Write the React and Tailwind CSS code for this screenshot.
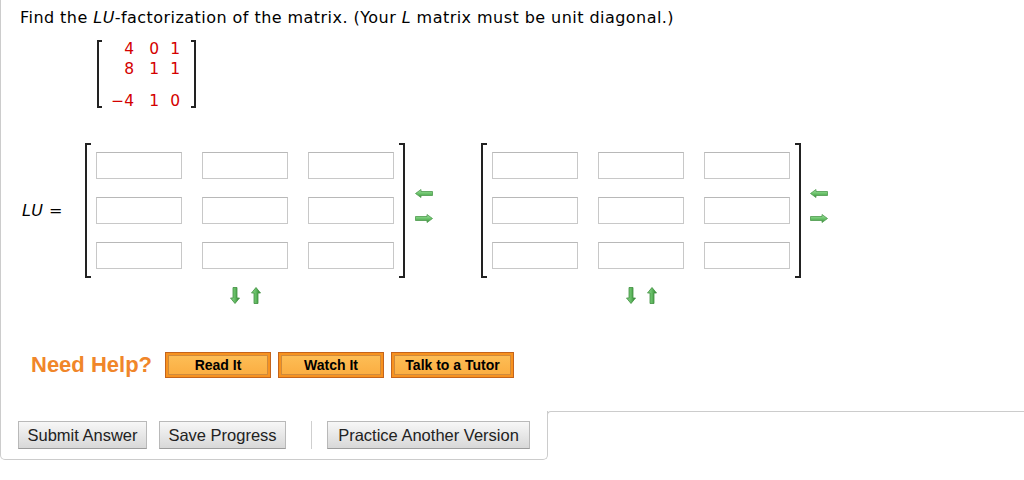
import React from 'react';

const sans = { fontFamily: '"DejaVu Sans", Verdana, sans-serif' };
const arial = { fontFamily: '"Liberation Sans", Arial, sans-serif' };

function HArrow({ dir }) {
  const d = dir === 'left'
    ? 'M0.5 4.5 L6 0.5 L6 2.5 L17.5 2.5 L17.5 6.5 L6 6.5 L6 8.5 Z'
    : 'M17.5 4.5 L12 0.5 L12 2.5 L0.5 2.5 L0.5 6.5 L12 6.5 L12 8.5 Z';
  return (
    <svg width="18" height="9" viewBox="0 0 18 9">
      <defs>
        <linearGradient id={'hg' + dir} x1="0" y1="0" x2="0" y2="1">
          <stop offset="0" stopColor="#a8e0a8" />
          <stop offset="0.5" stopColor="#6cc46c" />
          <stop offset="1" stopColor="#3f8f3f" />
        </linearGradient>
      </defs>
      <path d={d} fill={'url(#hg' + dir + ')'} stroke="#4d9a4d" strokeWidth="0.8" />
    </svg>
  );
}

function VArrow({ dir }) {
  const d = dir === 'down'
    ? 'M3 0.5 L7 0.5 L7 11 L9.5 11 L5 16.5 L0.5 11 L3 11 Z'
    : 'M3 16.5 L7 16.5 L7 6 L9.5 6 L5 0.5 L0.5 6 L3 6 Z';
  return (
    <svg width="10" height="17" viewBox="0 0 10 17">
      <defs>
        <linearGradient id={'vg' + dir} x1="0" y1="0" x2="1" y2="0">
          <stop offset="0" stopColor="#8fd48f" />
          <stop offset="0.5" stopColor="#62bb62" />
          <stop offset="1" stopColor="#2f7f2f" />
        </linearGradient>
      </defs>
      <path d={d} fill={'url(#vg' + dir + ')'} stroke="#3f8f3f" strokeWidth="0.8" />
    </svg>
  );
}

function Cell() {
  return (
    <input
      type="text"
      className="w-[86px] h-[27px] border border-[#c8c8c8] border-t-[#b8b8b8] bg-white outline-none"
    />
  );
}

function BigMatrix() {
  return (
    <div className="flex flex-col">
      <div className="flex">
        <div className="w-[6px] border-l-2 border-t-2 border-b-2 border-[#222]" />
        <div className="grid grid-cols-[86px_86px_86px] gap-x-[20px] gap-y-[18px] px-[5px] py-[9px]">
          {Array.from({ length: 9 }).map((_, i) => (
            <Cell key={i} />
          ))}
        </div>
        <div className="w-[6px] border-r-2 border-t-2 border-b-2 border-[#222]" />
      </div>
      <div className="flex justify-center gap-[11px] mt-[9px]">
        <VArrow dir="down" />
        <VArrow dir="up" />
      </div>
    </div>
  );
}

function SideArrows({ className }) {
  return (
    <div className={'flex flex-col gap-[16px] mt-[46px] ' + className}>
      <HArrow dir="left" />
      <HArrow dir="right" />
    </div>
  );
}

function HelpButton({ label, w }) {
  return (
    <button className={'h-[26px] border border-[#c4641c] bg-[#f7921f] p-[2px] flex ' + w} style={arial}>
      <span className="flex-1 flex items-center justify-center border border-[#cf8a3c] bg-linear-to-b from-[#fdbd55] to-[#fbae42] text-[14px] font-bold text-black leading-none">
        {label}
      </span>
    </button>
  );
}

function GrayButton({ label, w }) {
  return (
    <button
      className={'h-[28px] border border-[#b9b9b9] border-b-[#9c9c9c] bg-linear-to-b from-[#f7f7f7] to-[#d8d8d8] text-[16.5px] text-[#222] leading-none ' + w}
      style={arial}
    >
      {label}
    </button>
  );
}

export default function App() {
  const small = [
    ['4', '0', '1'],
    ['8', '1', '1'],
    ['\u22124', '1', '0'],
  ];

  return (
    <div className="w-[1024px] h-[480px] bg-white text-black overflow-hidden" style={sans}>
      <div className="border-l border-[#cccccc] h-[411px]">
        <p className="pt-[9px] pl-[19px] text-[16px] leading-[18px] tracking-[0.45px]">
          Find the <i>LU</i>-factorization of the matrix. (Your <i>L</i> matrix must be unit diagonal.)
        </p>

        <div className="flex ml-[96px] mt-[13px] h-[68px]">
          <div className="w-[5px] border-l-2 border-t-2 border-b-2 border-[#222]" />
          <div className="-mt-[1px] text-[15.5px] leading-[20px] text-[#d40000] pr-[11px]">
            {small.map((row, r) => (
              <div key={r} className={'grid grid-cols-[32px_25px_21px] text-right ' + (r === 2 ? 'mt-[12px]' : '')}>
                {row.map((v, c) => (
                  <span key={c}>{v}</span>
                ))}
              </div>
            ))}
          </div>
          <div className="w-[5px] border-r-2 border-t-2 border-b-2 border-[#222]" />
        </div>

        <div className="flex items-start mt-[35px]">
          <div className="w-[84px] pl-[21px] mt-[59px] text-[16px] leading-[18px] tracking-[0.4px]">
            <i>LU</i> =
          </div>
          <BigMatrix />
          <SideArrows className="ml-[10px] mr-[48px]" />
          <BigMatrix />
          <SideArrows className="ml-[9px]" />
        </div>

        <div className="flex items-center h-[26px] mt-[48px] ml-[30px]">
          <span className="text-[22px] font-bold text-[#f0862a] mr-[13px] leading-none" style={arial}>
            Need Help?
          </span>
          <div className="flex gap-[7px]">
            <HelpButton label="Read It" w="w-[106px]" />
            <HelpButton label="Watch It" w="w-[106px]" />
            <HelpButton label="Talk to a Tutor" w="w-[123px]" />
          </div>
        </div>
      </div>

      <div className="flex items-start">
        <div className="w-[548px] border-l border-b border-r border-[#cccccc] rounded-b-[5px] flex items-center pl-[17px] pt-[10px] pb-[10px]">
          <GrayButton label="Submit Answer" w="w-[129px]" />
          <div className="ml-[12px]">
            <GrayButton label="Save Progress" w="w-[127px]" />
          </div>
          <div className="w-px h-[28px] bg-[#cfcfcf] ml-[25px] mr-[15px]" />
          <GrayButton label="Practice Another Version" w="w-[203px]" />
        </div>
        <div className="flex-1 h-[6px] -ml-px border-t border-l border-[#cccccc] rounded-tl-[4px]" />
      </div>
    </div>
  );
}
